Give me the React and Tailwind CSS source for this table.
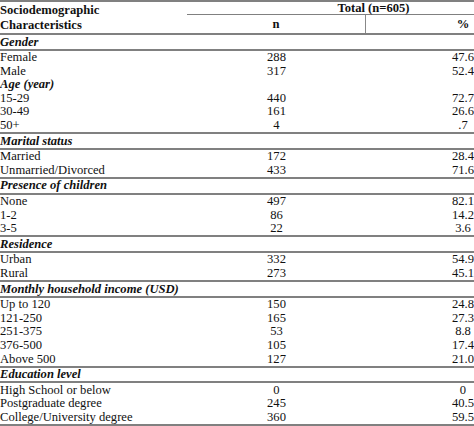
const sections = [
  { title: "Gender", lines: true, rows: [["Female", "288", "47.6"], ["Male", "317", "52.4"]] },
  { title: "Age (year)", lines: false, rows: [["15-29", "440", "72.7"], ["30-49", "161", "26.6"], ["50+", "4", ".7"]] },
  { title: "Marital status", lines: true, rows: [["Married", "172", "28.4"], ["Unmarried/Divorced", "433", "71.6"]] },
  { title: "Presence of children", lines: true, rows: [["None", "497", "82.1"], ["1-2", "86", "14.2"], ["3-5", "22", "3.6"]] },
  { title: "Residence", lines: true, rows: [["Urban", "332", "54.9"], ["Rural", "273", "45.1"]] },
  {
    title: "Monthly household income (USD)",
    lines: true,
    rows: [
      ["Up to 120", "150", "24.8"],
      ["121-250", "165", "27.3"],
      ["251-375", "53", "8.8"],
      ["376-500", "105", "17.4"],
      ["Above 500", "127", "21.0"],
    ],
  },
  {
    title: "Education level",
    lines: true,
    rows: [
      ["High School or below", "0", "0"],
      ["Postgraduate degree", "245", "40.5"],
      ["College/University degree", "360", "59.5"],
    ],
  },
];

function Row({ label, n, pct }) {
  return (
    <div className="flex h-[13.6px] items-center leading-none">
      <div className="w-[187px] whitespace-nowrap">{label}</div>
      <div className="w-[179px] text-center">{n}</div>
      <div className="w-[194px] text-center">{pct}</div>
    </div>
  );
}

export default function App() {
  return (
    <div className="w-[474px] h-[426px] overflow-hidden bg-white text-[#111]" style={{ fontFamily: '"Liberation Serif", "Times New Roman", serif' }}>
      <div className="w-[560px] text-[12.6px]">
        {/* header */}
        <div className="flex border-t-2 border-b-2 border-[#808080]">
          <div className="w-[187px] font-bold leading-[15px] pt-[0.5px]">
            <div>Sociodemographic</div>
            <div>Characteristics</div>
          </div>
          <div className="w-[373px] flex flex-col font-bold">
            <div className="h-[13px] flex items-center justify-center border-b border-[#808080] leading-none">Total (n=605)</div>
            <div className="flex h-[18px] items-center leading-none">
              <div className="w-[179px] h-full flex items-center justify-center border-r border-[#888]">n</div>
              <div className="w-[194px] text-center">%</div>
            </div>
          </div>
        </div>

        {sections.map((s, i) => (
          <div key={s.title}>
            <div
              className={
                s.lines
                  ? i === 0
                    ? "h-[13.6px] flex items-center font-bold italic leading-none border-b-2 border-[#808080] box-content"
                    : "h-[13.6px] flex items-center font-bold italic leading-none border-y-2 border-[#808080] box-content"
                  : "h-[13.6px] flex items-center font-bold italic leading-none"
              }
            >
              {s.title}
            </div>
            {s.rows.map(([label, n, pct]) => (
              <Row key={label} label={label} n={n} pct={pct} />
            ))}
          </div>
        ))}
        <div className="border-t-2 border-[#808080]" />
      </div>
    </div>
  );
}
